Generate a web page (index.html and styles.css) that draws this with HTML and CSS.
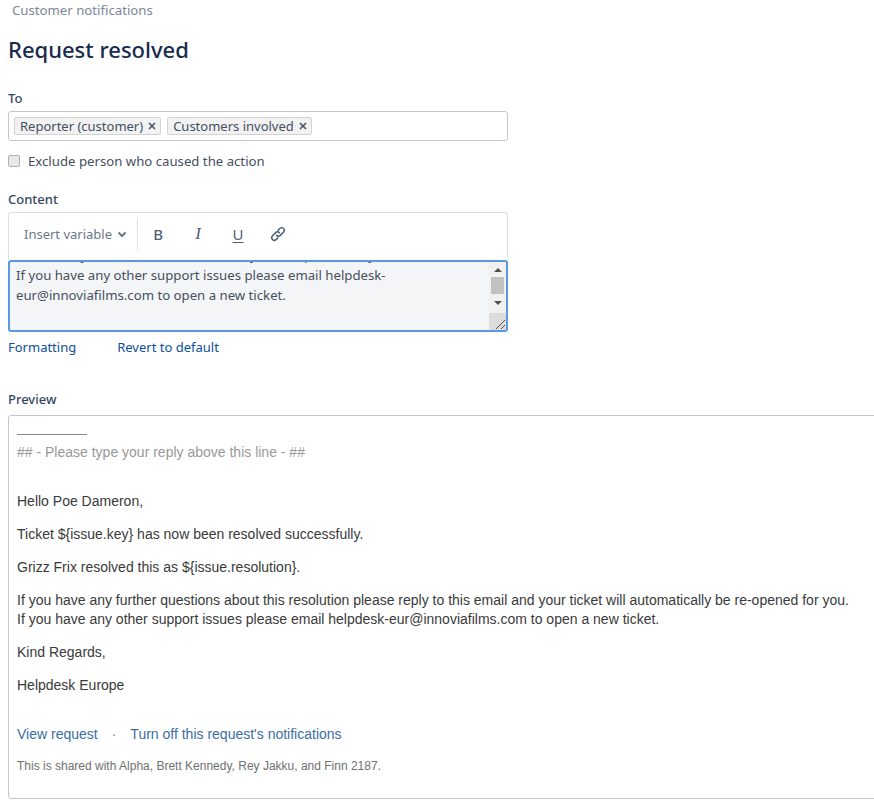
FILE: index.html
```html
<!DOCTYPE html>
<html lang="en">
  <head>
    <meta charset="UTF-8" />
    <meta name="viewport" content="width=device-width, initial-scale=1.0" />
    <title>Request resolved</title>
    <link rel="stylesheet" href="styles.css">
  </head>
  <body>
    <div class="breadcrumb">Customer notifications</div>
    <h1>Request resolved</h1>

    <div class="field-label to-label">To</div>
    <div class="tag-input">
      <span class="tag">Reporter (customer)
        <svg class="tag-x" width="8" height="8" viewBox="0 0 8 8"><path d="M1 1 L7 7 M7 1 L1 7" stroke="#454f5e" stroke-width="1.5" /></svg>
      </span>
      <span class="tag">Customers involved
        <svg class="tag-x" width="8" height="8" viewBox="0 0 8 8"><path d="M1 1 L7 7 M7 1 L1 7" stroke="#454f5e" stroke-width="1.5" /></svg>
      </span>
    </div>

    <label class="exclude">
      <span class="checkbox"></span>
      Exclude person who caused the action
    </label>

    <div class="field-label content-label">Content</div>
    <div class="toolbar">
      <div class="insert-variable">
        Insert variable
        <svg class="chevron" width="10" height="7" viewBox="0 0 10 7">
          <path d="M1.5 1.5 L5 5 L8.5 1.5" fill="none" stroke="#6b778c" stroke-width="2" />
        </svg>
      </div>
      <div class="tool-group">
        <span class="tool tool-b">B</span>
        <span class="tool tool-i">I</span>
        <span class="tool tool-u">U</span>
        <svg class="tool-link" width="18" height="18" viewBox="0 0 18 18">
          <path d="M7.6 10.4 a2.6 2.6 0 0 0 3.7 0 l3.2 -3.2 a2.6 2.6 0 0 0 -3.7 -3.7 l-1.6 1.6" fill="none" stroke="#505f79" stroke-width="1.5" stroke-linecap="round" />
          <path d="M10.4 7.6 a2.6 2.6 0 0 0 -3.7 0 l-3.2 3.2 a2.6 2.6 0 0 0 3.7 3.7 l1.6 -1.6" fill="none" stroke="#505f79" stroke-width="1.5" stroke-linecap="round" />
        </svg>
      </div>
    </div>
    <div class="editor">
      <div class="editor-text">
        <div>email and your ticket will automatically be re-opened for you.</div>
        <div>If you have any other support issues please email helpdesk-</div>
        <div>eur@innoviafilms.com to open a new ticket.</div>
      </div>
      <div class="scrollbar">
        <span class="arrow-up"></span>
        <span class="thumb"></span>
        <span class="arrow-down"></span>
      </div>
      <svg class="resizer" width="17" height="17" viewBox="0 0 17 17">
        <rect width="17" height="17" fill="#dcdcdc" />
        <path d="M7 16 L16 7 M12 16 L16 12" stroke="#555" stroke-width="1" />
      </svg>
    </div>
    <div class="editor-links">
      <a href="#">Formatting</a>
      <a href="#">Revert to default</a>
    </div>

    <div class="field-label preview-label">Preview</div>
    <div class="preview">
      <div class="rule"></div>
      <p class="reply-line">## - Please type your reply above this line - ##</p>
      <p class="hello">Hello Poe Dameron,</p>
      <p>Ticket ${issue.key} has now been resolved successfully.</p>
      <p>Grizz Frix resolved this as ${issue.resolution}.</p>
      <p class="further">If you have any further questions about this resolution please reply to this email and your ticket will automatically be re-opened for you.<br>If you have any other support issues please email helpdesk-eur@innoviafilms.com to open a new ticket.</p>
      <p>Kind Regards,</p>
      <p>Helpdesk Europe</p>
      <p class="preview-links"><a href="#">View request</a><span class="dot">·</span><a href="#">Turn off this request's notifications</a></p>
      <p class="shared">This is shared with Alpha, Brett Kennedy, Rey Jakku, and Finn 2187.</p>
    </div>
  </body>
</html>
```

FILE: styles.css
```css
html,
body {
  overflow: hidden;
}
body {
  font-family: "Noto Sans", "Open Sans", sans-serif;
  font-size: 13.2px;
  line-height: 20px;
  color: #172b4d;
  background: #fff;
  margin: 0;
  padding: 0 0 0 8px;
  width: 900px;
  height: 808px;
}
a {
  color: #0b4f9e;
  text-decoration: none;
}
.breadcrumb {
  color: #7a869a;
  padding-left: 4px;
}
h1 {
  font-size: 22px;
  line-height: 30px;
  font-weight: 500;
  color: #172b4d;
  margin: 14px 0 0;
}
.field-label {
  font-size: 13px;
  font-weight: 500;
  line-height: 18px;
  color: #344563;
}
.to-label {
  margin-top: 25px;
}
.tag-input {
  box-sizing: border-box;
  width: 500px;
  height: 30px;
  margin-top: 4px;
  border: 1px solid #c1c7d0;
  border-radius: 3px;
  padding: 5px;
  display: flex;
  gap: 6px;
}
.tag {
  box-sizing: border-box;
  display: flex;
  align-items: center;
  gap: 5px;
  height: 18px;
  line-height: 16px;
  padding: 0 4px 0 5px;
  font-size: 13px;
  background: #f2f2f2;
  border: 1px solid #d4d4d4;
  border-radius: 2px;
  color: #454f5e;
  white-space: nowrap;
}
.exclude {
  display: flex;
  align-items: center;
  gap: 8px;
  margin-top: 10px;
  color: #454f5e;
}
.checkbox {
  box-sizing: border-box;
  width: 12px;
  height: 12px;
  background: #e9e9e9;
  border: 1px solid #b0b0b0;
  border-radius: 2px;
}
.content-label {
  margin-top: 19px;
}
.toolbar {
  box-sizing: border-box;
  width: 500px;
  height: 48px;
  margin-top: 4px;
  padding: 0 0 5px 15px;
  border: 1px solid #dfe1e6;
  border-bottom: none;
  border-radius: 3px 3px 0 0;
  display: flex;
  align-items: center;
}
.insert-variable {
  display: flex;
  align-items: center;
  gap: 5px;
  padding-right: 10px;
  height: 32px;
  font-size: 13px;
  border-right: 1px solid #dfe1e6;
  color: #6b778c;
}
.tool-group {
  display: flex;
  align-items: center;
  color: #505f79;
}
.tool {
  width: 40px;
  text-align: center;
  font-size: 15px;
}
.tool-b {
  font-weight: 500;
}
.tool-i {
  font-family: "Liberation Serif", serif;
  font-style: italic;
  font-size: 17px;
}
.tool-u {
  text-decoration: underline;
  text-underline-offset: 2px;
}
.tool-link {
  margin-left: 11px;
}
.editor {
  box-sizing: border-box;
  position: relative;
  width: 500px;
  height: 72px;
  border: 2px solid #5a98e2;
  border-radius: 3px;
  background: #f4f5f7;
  overflow: hidden;
}
.editor-text {
  margin-top: -17px;
  padding-left: 6px;
  color: #454f5e;
  white-space: nowrap;
}
.scrollbar {
  position: absolute;
  top: 0;
  right: 0;
  bottom: 17px;
  width: 17px;
  background: #f1f1f1;
  display: flex;
  flex-direction: column;
  align-items: center;
  padding-top: 6px;
  box-sizing: border-box;
}
.arrow-up,
.arrow-down {
  width: 0;
  height: 0;
  border-left: 4px solid transparent;
  border-right: 4px solid transparent;
}
.arrow-up {
  border-bottom: 4px solid #505050;
}
.arrow-down {
  border-top: 4px solid #505050;
}
.thumb {
  width: 13px;
  height: 17px;
  background: #c1c1c1;
  margin: 5px 0 7px;
}
.resizer {
  position: absolute;
  right: 0;
  bottom: 0;
}
.editor-links {
  display: flex;
  gap: 41px;
  margin-top: 5px;
  font-size: 13px;
}
.preview-label {
  margin-top: 33px;
}
.preview {
  box-sizing: border-box;
  height: 384px;
  margin-top: 7px;
  padding: 8px 8px 0;
  border: 1px solid #c1c7d0;
  border-radius: 3px;
  font-family: "Liberation Sans", sans-serif;
  font-size: 14px;
  line-height: 17px;
  color: #3a3a3a;
}
.preview p {
  margin: 0 0 16px;
}
.rule {
  width: 70px;
  border-top: 1px solid #888;
  margin-top: 10px;
}
.preview .reply-line {
  color: #999;
  margin: 9px 0 32px;
}
.preview .further {
  line-height: 19px;
  margin: -1px 0 15px;
}
.preview .preview-links {
  margin: 32px 0 0;
}
.preview-links a {
  color: #3b6ea5;
}
.dot {
  color: #888;
  margin: 0 14px;
}
.preview .shared {
  margin-top: 15px;
  font-size: 12px;
  color: #707070;
}
```
